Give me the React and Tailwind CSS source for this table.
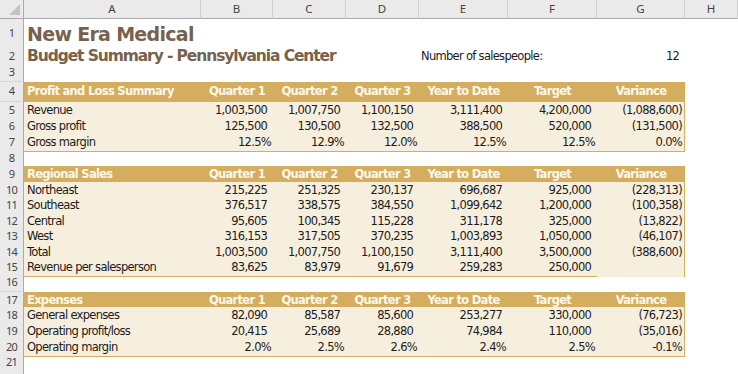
import React from "react";

const GRID = "grid grid-cols-[24px_177px_72px_73px_73px_89px_89px_88px_1fr]";
const RH = "flex items-center justify-center bg-[#EAEAEA] border-r border-r-[#ABABAB] border-b border-b-[#D6D6D6] text-[11px] text-[#444] font-['Noto_Sans',sans-serif]";

function Row({ n, h, children }) {
  return (
    <div className={`${GRID} ${h}`}>
      <div className={RH}>{n}</div>
      {children}
    </div>
  );
}

function Num({ v, cls }) {
  const plain = !(v.endsWith("%") || v.endsWith(")"));
  return (
    <div className={`flex items-center justify-end pr-[2px] whitespace-nowrap ${cls}`}>
      {v}
      {plain && v !== "" ? <span className="invisible">)</span> : null}
    </div>
  );
}

function Header({ n, h, label }) {
  const heads = ["Quarter 1", "Quarter 2", "Quarter 3", "Year to Date", "Target", "Variance"];
  return (
    <Row n={n} h={h}>
      <div className="flex items-center pl-[3px] bg-[#D5AD5E] text-[#FFF8EA] font-bold whitespace-nowrap">{label}</div>
      {heads.map((t) => (
        <div key={t} className="flex items-center justify-center bg-[#D5AD5E] text-[#FFF8EA] font-bold whitespace-nowrap">{t}</div>
      ))}
      <div />
    </Row>
  );
}

function Body({ n, h, label, vals, bottom }) {
  const bb = "border-b border-b-[#D5AD5E]";
  const full = bottom === "full";
  const part = bottom === "part";
  return (
    <Row n={n} h={h}>
      <div className={`flex items-center pl-[3px] bg-[#F7EFDE] whitespace-nowrap ${full || part ? bb : ""}`}>{label}</div>
      {vals.slice(0, 5).map((v, i) => (
        <Num key={i} v={v} cls={`bg-[#F7EFDE] ${full || part ? bb : ""}`} />
      ))}
      <Num v={vals[5]} cls={`bg-[#F7EFDE] border-r border-r-[#D5AD5E] ${full ? bb : ""}`} />
      <div />
    </Row>
  );
}

function Blank({ n, h }) {
  return (
    <Row n={n} h={h}>
      <div />
    </Row>
  );
}

export default function App() {
  const cols = ["A", "B", "C", "D", "E", "F", "G", "H"];
  return (
    <div className="w-[738px] h-[374px] overflow-hidden bg-white text-[11.5px] tracking-[-0.7px] text-[#1B1B1B] font-['DejaVu_Sans',sans-serif]">
      <div className={`${GRID} h-[19px]`}>
        <div className="relative bg-[#EAEAEA] border-r border-r-[#ABABAB] border-b border-b-[#ABABAB]">
          <svg className="absolute right-[3px] bottom-[3px]" width="11" height="11" viewBox="0 0 11 11">
            <polygon points="11,0 11,11 0,11" fill="#C3C3C3" />
          </svg>
        </div>
        {cols.map((c) => (
          <div key={c} className="flex items-center justify-center bg-[#EAEAEA] border-r border-r-[#D0D0D0] border-b border-b-[#ABABAB] text-[11.5px] tracking-normal text-[#444] font-['Noto_Sans',sans-serif]">
            {c}
          </div>
        ))}
      </div>

      <Row n="1" h="h-[26px]">
        <div className="flex items-center pl-[3px] pt-[1px] whitespace-nowrap text-[19px] tracking-[-0.7px] font-bold text-[#78614D]">New Era Medical</div>
      </Row>
      <Row n="2" h="h-[18px]">
        <div className="flex items-center pl-[3px] whitespace-nowrap text-[15.5px] tracking-[-1.1px] font-bold text-[#78614D]">Budget Summary - Pennsylvania Center</div>
        <div />
        <div />
        <div />
        <div className="flex items-center pl-[2px] whitespace-nowrap">Number of salespeople:</div>
        <div />
        <Num v="12" cls="" />
      </Row>
      <Blank n="3" h="h-[19px]" />
      <Header n="4" h="h-[20px]" label="Profit and Loss Summary" />
      <Body n="5" h="h-[16px]" label="Revenue" vals={["1,003,500", "1,007,750", "1,100,150", "3,111,400", "4,200,000", "(1,088,600)"]} />
      <Body n="6" h="h-[16px]" label="Gross profit" vals={["125,500", "130,500", "132,500", "388,500", "520,000", "(131,500)"]} />
      <Body n="7" h="h-[16px]" label="Gross margin" vals={["12.5%", "12.9%", "12.0%", "12.5%", "12.5%", "0.0%"]} bottom="full" />
      <Blank n="8" h="h-[16px]" />
      <Header n="9" h="h-[16px]" label="Regional Sales" />
      <Body n="10" h="h-[15px]" label="Northeast" vals={["215,225", "251,325", "230,137", "696,687", "925,000", "(228,313)"]} />
      <Body n="11" h="h-[16px]" label="Southeast" vals={["376,517", "338,575", "384,550", "1,099,642", "1,200,000", "(100,358)"]} />
      <Body n="12" h="h-[15px]" label="Central" vals={["95,605", "100,345", "115,228", "311,178", "325,000", "(13,822)"]} />
      <Body n="13" h="h-[16px]" label="West" vals={["316,153", "317,505", "370,235", "1,003,893", "1,050,000", "(46,107)"]} />
      <Body n="14" h="h-[15px]" label="Total" vals={["1,003,500", "1,007,750", "1,100,150", "3,111,400", "3,500,000", "(388,600)"]} />
      <Body n="15" h="h-[15px]" label="Revenue per salesperson" vals={["83,625", "83,979", "91,679", "259,283", "250,000", ""]} bottom="part" />
      <Blank n="16" h="h-[18px]" />
      <Header n="17" h="h-[15px]" label="Expenses" />
      <Body n="18" h="h-[16px]" label="General expenses" vals={["82,090", "85,587", "85,600", "253,277", "330,000", "(76,723)"]} />
      <Body n="19" h="h-[16px]" label="Operating profit/loss" vals={["20,415", "25,689", "28,880", "74,984", "110,000", "(35,016)"]} />
      <Body n="20" h="h-[15px]" label="Operating margin" vals={["2.0%", "2.5%", "2.6%", "2.4%", "2.5%", "-0.1%"]} bottom="full" />
      <Blank n="21" h="h-[15px]" />
      <Blank n="" h="h-[15px]" />
    </div>
  );
}
